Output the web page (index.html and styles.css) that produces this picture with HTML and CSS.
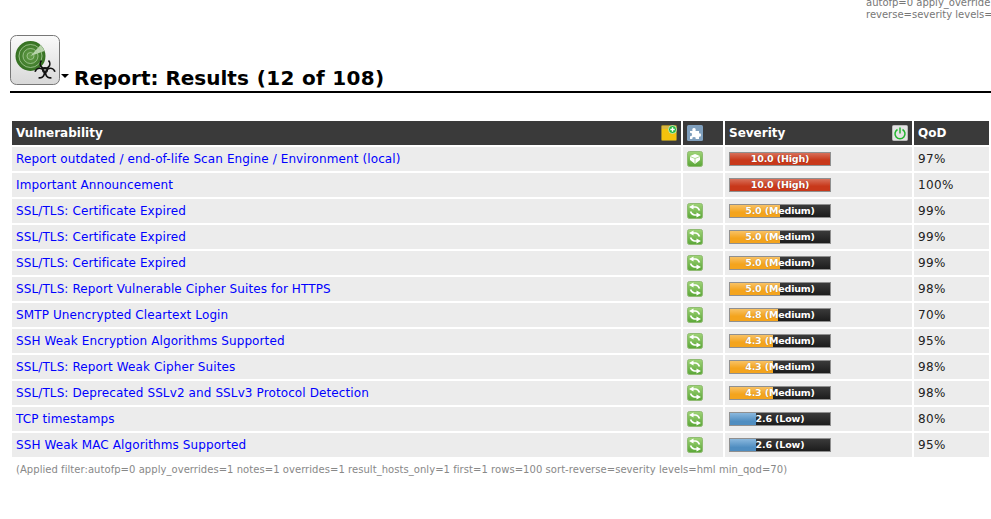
FILE: index.html
```html
<!DOCTYPE html>
<html lang="en">
<head>
<meta charset="utf-8">
<title>Report: Results</title>
<link rel="stylesheet" href="styles.css">
</head>
<body>
<svg class="defs" width="0" height="0" aria-hidden="true">
  <defs>
    <linearGradient id="gb" x1="0" y1="0" x2="0" y2="1"><stop offset="0" stop-color="#9fd377"/><stop offset="1" stop-color="#5aa637"/></linearGradient>
    <symbol id="ovr" viewBox="0 0 16 16">
      <rect x="0.5" y="0.5" width="15" height="15" rx="2" fill="url(#gb)" stroke="#8fbb72"/>
      <path d="M2 4 L6.500 1.500 L6.500 6.500 Z M14 12 L9.500 9.500 L9.500 14.500 Z" fill="#fff"/>
      <path d="M6 4 H8.500 Q11 4 12.500 7.500 M10 12 H7.500 Q5 12 3.500 8.500" fill="none" stroke="#fff" stroke-width="1.700"/>
    </symbol>
  </defs>
</svg>
<div class="topnote">
  <div>autofp=0 apply_override</div>
  <div>reverse=severity levels=</div>
</div>
<header class="heading">
  <div class="logo">
    <svg width="50" height="50" viewBox="0 0 50 50">
      <defs>
        <linearGradient id="lbg" x1="0" y1="0" x2="0" y2="1"><stop offset="0" stop-color="#fafafa"/><stop offset="1" stop-color="#d8d8d8"/></linearGradient>
        <radialGradient id="rad" cx="0.5" cy="0.5" r="0.55"><stop offset="0" stop-color="#66a04a"/><stop offset="1" stop-color="#2e6a1c"/></radialGradient>
      </defs>
      <rect x="0.5" y="0.5" width="49" height="49" rx="6" fill="url(#lbg)" stroke="#777"/>
      <circle cx="20.500" cy="21" r="15" fill="url(#rad)"/>
      <path d="M20.500 21 L30.500 10 A15 15 0 0 1 34.500 16 Z" fill="#b9d4ad"/>
      <g fill="none" stroke="#a9cd9b" stroke-width="0.800">
        <circle cx="20.500" cy="21" r="3.500"/><circle cx="20.500" cy="21" r="7.500"/><circle cx="20.500" cy="21" r="11.500"/>
      </g>
      <g fill="none" stroke="#111" stroke-width="1.700">
        <path d="M31.500 25.500 A4.800 4.800 0 1 0 38.500 25.500"/>
        <path d="M31.500 25.500 A4.800 4.800 0 1 0 38.500 25.500" transform="rotate(120 35 35)"/>
        <path d="M31.500 25.500 A4.800 4.800 0 1 0 38.500 25.500" transform="rotate(240 35 35)"/>
        <circle cx="35" cy="35" r="2.400" stroke-width="1.300"/>
      </g>
    </svg>
  </div>
  <span class="caret"></span>
  <h1 class="title">Report: Results <span class="count">(12 of 108)</span></h1>
</header>
<table class="results">
  <colgroup><col class="c-vuln"><col class="c-sol"><col class="c-sev"><col class="c-qod"><col class="c-rest"></colgroup>
  <thead>
    <tr>
      <th><div class="th-in">Vulnerability
        <svg width="16" height="16" viewBox="0 0 16 16"><rect x="0.500" y="0.500" width="15" height="15" rx="1" fill="#f4c20d" stroke="#a08a2a"/><rect x="1" y="1" width="14" height="3" fill="#d9b640"/><circle cx="11.500" cy="4.500" r="4" fill="#1fb53a" stroke="#fff" stroke-width="0.600"/><path d="M11.500 2.300v4.400M9.300 4.500h4.400" stroke="#fff" stroke-width="1.400"/></svg>
      </div></th>
      <th><div class="th-in th-center">
        <svg width="16" height="16" viewBox="0 0 16 16"><rect width="16" height="16" rx="1.500" fill="#7f9fbd"/><path d="M3 6h2.500Q4.700 3 7 3t1.500 3H12v2.500q2-.8 2 1.500t-2 1.500V14H8.500q.8-2-1.500-2t-1.500 2H3v-3q2 .8 2-1.500T3 8z" fill="#fff"/></svg>
      </div></th>
      <th><div class="th-in">Severity
        <svg width="16" height="16" viewBox="0 0 16 16"><rect x="0.500" y="0.500" width="15" height="15" rx="1" fill="#e4e4e4" stroke="#bbb"/><path d="M5.500 4.500a5 5 0 1 0 5 0" fill="none" stroke="#22b52e" stroke-width="1.500"/><path d="M8 2.500v6" stroke="#22b52e" stroke-width="1.500"/></svg>
      </div></th>
      <th><div class="th-in">QoD</div></th>
      <th></th>
    </tr>
  </thead>
  <tbody>
    <tr>
      <td><a href="#">Report outdated / end-of-life Scan Engine / Environment (local)</a></td>
      <td class="sol"><svg class="ico" width="16" height="16" viewBox="0 0 16 16"><rect x="0.500" y="0.500" width="15" height="15" rx="2" fill="url(#gb)" stroke="#8fbb72"/><path d="M3 5 L8 3 L13 5 L13 9 L8 13 L3 9 Z" fill="#fff"/><path d="M3 5.500 L8 7.500 L13 5.500 M8 7.500 V13" fill="none" stroke="#9ed07c" stroke-width="0.800"/></svg></td>
      <td><div class="bar bar-high"><span class="fill"></span><span class="lbl">10.0 (High)</span></div></td>
      <td class="qod">97%</td><td></td>
    </tr>
    <tr>
      <td><a href="#">Important Announcement</a></td>
      <td class="sol"></td>
      <td><div class="bar bar-high"><span class="fill"></span><span class="lbl">10.0 (High)</span></div></td>
      <td class="qod">100%</td><td></td>
    </tr>
    <tr>
      <td><a href="#">SSL/TLS: Certificate Expired</a></td>
      <td class="sol"><svg class="ico" width="16" height="16"><use href="#ovr"/></svg></td>
      <td><div class="bar bar-med"><span class="fill"></span><span class="lbl">5.0 (Medium)</span></div></td>
      <td class="qod">99%</td><td></td>
    </tr>
    <tr>
      <td><a href="#">SSL/TLS: Certificate Expired</a></td>
      <td class="sol"><svg class="ico" width="16" height="16"><use href="#ovr"/></svg></td>
      <td><div class="bar bar-med"><span class="fill"></span><span class="lbl">5.0 (Medium)</span></div></td>
      <td class="qod">99%</td><td></td>
    </tr>
    <tr>
      <td><a href="#">SSL/TLS: Certificate Expired</a></td>
      <td class="sol"><svg class="ico" width="16" height="16"><use href="#ovr"/></svg></td>
      <td><div class="bar bar-med"><span class="fill"></span><span class="lbl">5.0 (Medium)</span></div></td>
      <td class="qod">99%</td><td></td>
    </tr>
    <tr>
      <td><a href="#">SSL/TLS: Report Vulnerable Cipher Suites for HTTPS</a></td>
      <td class="sol"><svg class="ico" width="16" height="16"><use href="#ovr"/></svg></td>
      <td><div class="bar bar-med"><span class="fill"></span><span class="lbl">5.0 (Medium)</span></div></td>
      <td class="qod">98%</td><td></td>
    </tr>
    <tr>
      <td><a href="#">SMTP Unencrypted Cleartext Login</a></td>
      <td class="sol"><svg class="ico" width="16" height="16"><use href="#ovr"/></svg></td>
      <td><div class="bar bar-med48"><span class="fill"></span><span class="lbl">4.8 (Medium)</span></div></td>
      <td class="qod">70%</td><td></td>
    </tr>
    <tr>
      <td><a href="#">SSH Weak Encryption Algorithms Supported</a></td>
      <td class="sol"><svg class="ico" width="16" height="16"><use href="#ovr"/></svg></td>
      <td><div class="bar bar-med43"><span class="fill"></span><span class="lbl">4.3 (Medium)</span></div></td>
      <td class="qod">95%</td><td></td>
    </tr>
    <tr>
      <td><a href="#">SSL/TLS: Report Weak Cipher Suites</a></td>
      <td class="sol"><svg class="ico" width="16" height="16"><use href="#ovr"/></svg></td>
      <td><div class="bar bar-med43"><span class="fill"></span><span class="lbl">4.3 (Medium)</span></div></td>
      <td class="qod">98%</td><td></td>
    </tr>
    <tr>
      <td><a href="#">SSL/TLS: Deprecated SSLv2 and SSLv3 Protocol Detection</a></td>
      <td class="sol"><svg class="ico" width="16" height="16"><use href="#ovr"/></svg></td>
      <td><div class="bar bar-med43"><span class="fill"></span><span class="lbl">4.3 (Medium)</span></div></td>
      <td class="qod">98%</td><td></td>
    </tr>
    <tr>
      <td><a href="#">TCP timestamps</a></td>
      <td class="sol"><svg class="ico" width="16" height="16"><use href="#ovr"/></svg></td>
      <td><div class="bar bar-low"><span class="fill"></span><span class="lbl">2.6 (Low)</span></div></td>
      <td class="qod">80%</td><td></td>
    </tr>
    <tr>
      <td><a href="#">SSH Weak MAC Algorithms Supported</a></td>
      <td class="sol"><svg class="ico" width="16" height="16"><use href="#ovr"/></svg></td>
      <td><div class="bar bar-low"><span class="fill"></span><span class="lbl">2.6 (Low)</span></div></td>
      <td class="qod">95%</td><td></td>
    </tr>
  </tbody>
</table>
<p class="filter">(Applied filter:autofp=0 apply_overrides=1 notes=1 overrides=1 result_hosts_only=1 first=1 rows=100 sort-reverse=severity levels=hml min_qod=70)</p>
</body>
</html>
```

FILE: styles.css
```css
html, body {
  margin: 0;
  height: 100%;
  overflow: hidden;
  background: #fff;
}
body {
  position: relative;
  width: 991px;
  font-family: "DejaVu Sans", Verdana, sans-serif;
  font-size: 12px;
  color: #222;
}
.defs { position: absolute; }
.topnote {
  position: absolute;
  left: 866px;
  top: -3px;
  font-size: 10px;
  line-height: 12px;
  color: #777;
  white-space: nowrap;
}
.heading {
  display: flex;
  align-items: flex-end;
  margin: 35px 0 0 10px;
  height: 56px;
  border-bottom: 2px solid #000;
  width: 981px;
}
.logo {
  width: 50px;
  height: 50px;
  margin-bottom: 6px;
}
.logo svg { display: block; }
.caret {
  width: 0;
  height: 0;
  margin: 0 5px 13px 1px;
  border-style: solid;
  border-width: 4px 4.500px 0;
  border-color: #000 transparent transparent;
}
.title {
  margin: 0;
  font-size: 20px;
  line-height: 26px;
  font-weight: bold;
  color: #000;
  white-space: nowrap;
}
.count {
  margin-left: 1px;
  letter-spacing: .3px;
}
.results {
  margin: 26px 0 0 10px;
  border-collapse: separate;
  border-spacing: 2px;
  table-layout: fixed;
  width: 1000px;
}
.c-vuln { width: 669px; }
.c-sol { width: 40px; }
.c-sev { width: 187px; }
.c-qod { width: 75px; }
.c-rest { width: 21px; }
.results th {
  height: 24px;
  padding: 0;
  background: #3a3a3a;
  color: #fff;
  text-align: left;
  font-size: 12px;
  font-weight: bold;
}
.th-in {
  display: flex;
  align-items: center;
  justify-content: space-between;
  padding: 0 4px;
}
.th-center { justify-content: flex-start; }
.th-in svg { display: block; }
.results td {
  height: 24px;
  padding: 0 4px;
  background: #ececec;
  vertical-align: middle;
  letter-spacing: .11px;
}
.results td:last-child { background: transparent; }
.results a {
  color: #0000ff;
  text-decoration: none;
}
.ico { display: block; }
.results .qod {
  letter-spacing: .35px;
}
.bar {
  position: relative;
  width: 100px;
  height: 12px;
  border: 1px solid #8f8f8f;
  background: linear-gradient(#3a3a3a, #1c1c1c);
  overflow: hidden;
}
.fill {
  position: absolute;
  left: 0;
  top: 0;
  bottom: 0;
}
.lbl {
  position: absolute;
  left: 0;
  right: 0;
  top: 0;
  text-align: center;
  font-size: 9.500px;
  letter-spacing: -.15px;
  line-height: 12px;
  font-weight: bold;
  color: #fff;
  text-shadow: 0 0 1px rgba(0,0,0,.35);
  white-space: nowrap;
}
.bar-high .fill { width: 100%; background: linear-gradient(#d8705a, #c8381a 60%); }
.bar-med .fill { width: 50%; background: linear-gradient(#f8c265, #f4a41d 60%); }
.bar-med48 .fill { width: 48%; background: linear-gradient(#f8c265, #f4a41d 60%); }
.bar-med43 .fill { width: 43%; background: linear-gradient(#f8c265, #f4a41d 60%); }
.bar-low .fill { width: 26%; background: linear-gradient(#8ab8de, #4f8dc0 70%); }
.filter {
  margin: 4px 0 0 16px;
  font-size: 10px;
  letter-spacing: .05px;
  line-height: 14px;
  color: #888;
  white-space: nowrap;
}
```
